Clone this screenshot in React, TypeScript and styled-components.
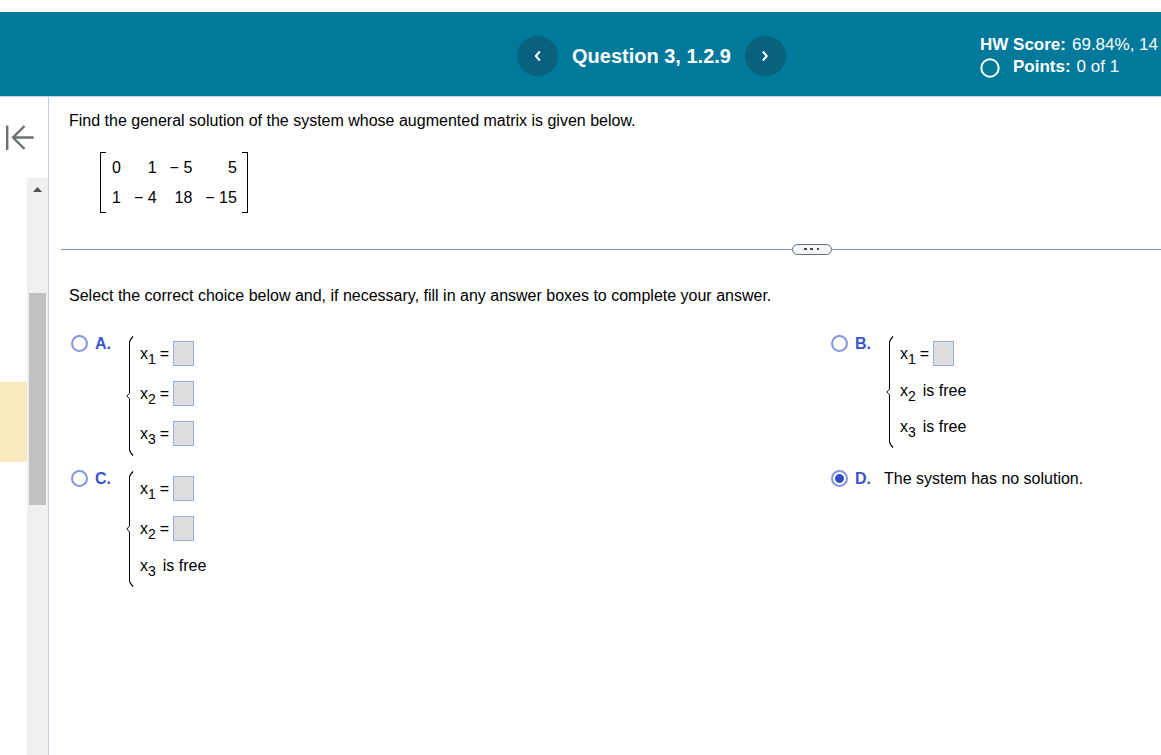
import React, { useState } from "react";
import styled, { createGlobalStyle } from "styled-components";

const GlobalStyle = createGlobalStyle`
  *, *::before, *::after { box-sizing: border-box; }
  body {
    margin: 0;
    background: #fff;
    color: #000;
    font-family: "Liberation Sans", Arial, sans-serif;
    font-size: 16px;
    line-height: 20px;
  }
`;

const Page = styled.div`
  display: flex;
  flex-direction: column;
  min-height: 100vh;
  padding-top: 12px;
  overflow: hidden;
`;

const Header = styled.header`
  display: grid;
  grid-template-columns: minmax(0, 1fr) 463px 181px;
  align-items: center;
  min-height: 85px;
  padding-top: 4px;
  background: #00799b;
  border-bottom: 1px solid #c9d0e0;
  color: #fff;
`;

const QuestionNav = styled.nav`
  grid-column: 2;
  display: flex;
  align-items: center;
  gap: 14px;
`;

const Title = styled.h1`
  margin: 0;
  font-size: 20px;
  line-height: 24px;
  white-space: nowrap;
`;

const RoundButton = styled.button`
  display: flex;
  align-items: center;
  justify-content: center;
  width: 41px;
  height: 40px;
  padding: 0;
  border: 0;
  border-radius: 50%;
  background: #08627f;
  color: #fff;
`;

const Score = styled.div`
  font-size: 17px;
  line-height: 22px;
  white-space: nowrap;
`;

const ScoreLine = styled.div`
  display: flex;
  align-items: center;
  gap: 6px;
`;

const StatusRing = styled.svg`
  margin: 2px 7px 0 0;
`;

const Body = styled.div`
  flex: 1;
  display: flex;
`;

const Sidebar = styled.aside`
  display: flex;
  flex-direction: column;
  width: 49px;
  border-right: 1px solid #c5cee0;
`;

const CollapseButton = styled.button`
  height: 81px;
  padding: 0 0 0 5px;
  border: 0;
  background: none;
  text-align: left;
  line-height: 0;
`;

const SidebarPane = styled.div`
  flex: 1;
  display: flex;
`;

const QuestionStrip = styled.div`
  flex: 1;
  padding-top: 204px;
`;

const CurrentMark = styled.div`
  height: 80px;
  background: #f9ebbd;
`;

const ScrollTrack = styled.div`
  display: flex;
  flex-direction: column;
  align-items: center;
  gap: 101px;
  width: 21px;
  padding-top: 9px;
  background: #f0f0f0;
`;

const ScrollThumb = styled.div`
  width: 17px;
  height: 212px;
  background: #c1c1c1;
`;

const Main = styled.main`
  flex: 1;
  min-width: 0;
  padding: 14px 0 0 12px;
`;

const Prompt = styled.p`
  margin: 0;
  padding-left: 8px;
`;

const MatrixFrame = styled.div`
  display: flex;
  width: max-content;
  margin: 21px 0 31px 39px;
`;

const Bracket = styled.span<{ $side: "left" | "right" }>`
  width: 6px;
  border: 1px solid #000;
  border-${(p) => (p.$side === "left" ? "right" : "left")}: 0;
`;

const Matrix = styled.table`
  border-collapse: collapse;
  margin: 1px 5px 0 6px;

  td {
    height: 30px;
    padding: 0 0 0 13px;
    text-align: right;
    white-space: nowrap;
  }
  td:first-child { padding-left: 0; }
`;

const Divider = styled.div`
  display: flex;
  align-items: center;
  margin-bottom: 31px;
`;

const Rule = styled.span<{ $grow: number }>`
  flex: ${(p) => p.$grow} 1 0;
  height: 1px;
  background: #8391a5;
`;

const ExpandButton = styled.button`
  display: flex;
  align-items: center;
  justify-content: center;
  width: 40px;
  height: 11px;
  padding: 0;
  border: 1px solid #5f6f80;
  border-radius: 6px;
  background: #f4f6f8;
`;

const Choices = styled.fieldset`
  display: grid;
  grid-template-columns: 760fr 332fr;
  row-gap: 14px;
  margin: 0;
  padding: 29px 0 0 8px;
  border: 0;
`;

const Choice = styled.div`
  display: flex;
  align-items: flex-start;
`;

const ChoiceLabel = styled.label`
  display: flex;
  align-items: center;
  gap: 7px;
  width: 55px;
  padding-left: 2px;
  line-height: 16px;
  font-weight: bold;
  color: #3a55cc;
`;

const Radio = styled.input`
  appearance: none;
  width: 17px;
  height: 17px;
  margin: 0;
  border: 2px solid #8395dd;
  border-radius: 50%;
  background: #fff;

  &:checked {
    background: radial-gradient(circle, #3150c8 0 4px, #fff 5px);
  }
`;

const System = styled.div`
  display: flex;
  gap: 6px;
  margin-left: 2px;
  padding-top: 1px;
`;

const BraceColumn = styled.span`
  display: flex;
  flex-direction: column;
  width: 8px;
`;

const BraceStem = styled.span`
  flex: 1;
  margin-left: 3px;
  border-left: 1px solid #000;
`;

const Equation = styled.div<{ $boxed: boolean }>`
  display: flex;
  height: ${(p) => (p.$boxed ? 40 : 36)}px;
  padding-top: 5px;
  line-height: ${(p) => (p.$boxed ? 25 : 20)}px;
  gap: 7px;
`;

const Sub = styled.sub`
  font-size: 14px;
  line-height: 0;
  vertical-align: -5px;
`;

const AnswerBox = styled.input`
  width: 21px;
  height: 25px;
  padding: 0;
  border: 1px solid #96aee4;
  border-radius: 0;
  background: #dedede;
`;

const BoxedLabel = styled.label`
  display: flex;
  gap: 4px;
`;

const Statement = styled.span`
  line-height: 18px;
`;

const matrixRows = [
  ["0", "1", "− 5", "5"],
  ["1", "− 4", "18", "− 15"],
];

const choices: { id: string; boxed?: boolean[]; text?: string }[] = [
  { id: "A", boxed: [true, true, true] },
  { id: "B", boxed: [true, false, false] },
  { id: "C", boxed: [true, true, false] },
  { id: "D", text: "The system has no solution." },
];

function Chevron({ direction }: { direction: "left" | "right" }) {
  return (
    <svg width="8" height="12" viewBox="0 0 8 12" fill="none" stroke="currentColor" strokeWidth="2" aria-hidden="true">
      <path d={direction === "left" ? "M5.8 1.5 1.8 6 5.8 10.5" : "M1.8 1.5 5.8 6 1.8 10.5"} />
    </svg>
  );
}

function Brace() {
  return (
    <BraceColumn aria-hidden="true">
      <svg width="8" height="6" viewBox="0 0 8 6" fill="none" stroke="#000" strokeWidth="1.2">
        <path d="M7 .5 4.5 3.5 3.5 6" />
      </svg>
      <BraceStem />
      <svg width="8" height="8" viewBox="0 0 8 8" fill="none" stroke="#000">
        <path d="M3.5 0V1.2L.8 4 3.5 6.8V8" />
      </svg>
      <BraceStem />
      <svg width="8" height="6" viewBox="0 0 8 6" fill="none" stroke="#000" strokeWidth="1.2">
        <path d="M3.5 0 4.5 2.5 7 5.5" />
      </svg>
    </BraceColumn>
  );
}

function EquationRow({ index, boxed }: { index: number; boxed: boolean }) {
  const variable = (
    <span>
      x<Sub>{index}</Sub>
    </span>
  );
  return (
    <Equation $boxed={boxed}>
      {boxed ? (
        <BoxedLabel>
          {variable}
          <span>=</span>
          <AnswerBox type="text" disabled />
        </BoxedLabel>
      ) : (
        <>
          {variable}
          <span>is free</span>
        </>
      )}
    </Equation>
  );
}

export default function App() {
  const [selected, setSelected] = useState("D");

  return (
    <>
      <GlobalStyle />
      <Page>
        <Header>
          <QuestionNav aria-label="Questions">
            <RoundButton type="button" aria-label="Previous question">
              <Chevron direction="left" />
            </RoundButton>
            <Title>Question 3, 1.2.9</Title>
            <RoundButton type="button" aria-label="Next question">
              <Chevron direction="right" />
            </RoundButton>
          </QuestionNav>
          <Score>
            <ScoreLine>
              <strong>HW Score:</strong>
              <span>69.84%, 14</span>
            </ScoreLine>
            <ScoreLine>
              <StatusRing width="20" height="20" viewBox="0 0 20 20" fill="none" stroke="#fff" strokeWidth="2" aria-hidden="true">
                <circle cx="10" cy="10" r="8.7" />
              </StatusRing>
              <strong>Points:</strong>
              <span>0 of 1</span>
            </ScoreLine>
          </Score>
        </Header>
        <Body>
          <Sidebar>
            <CollapseButton type="button" aria-label="Collapse question list">
              <svg width="30" height="26" viewBox="0 0 30 26" fill="none" stroke="#6c7272" strokeWidth="2.4" aria-hidden="true">
                <path d="M2.2 .5V25M28.7 12.5H8M19.5 1 8 12.5 19.5 24" />
              </svg>
            </CollapseButton>
            <SidebarPane>
              <QuestionStrip>
                <CurrentMark />
              </QuestionStrip>
              <ScrollTrack>
                <svg width="9" height="5" viewBox="0 0 9 5" fill="#505050" aria-hidden="true">
                  <path d="M0 5 4.5 0 9 5Z" />
                </svg>
                <ScrollThumb />
              </ScrollTrack>
            </SidebarPane>
          </Sidebar>
          <Main>
            <Prompt>Find the general solution of the system whose augmented matrix is given below.</Prompt>
            <MatrixFrame>
              <Bracket $side="left" />
              <Matrix>
                <tbody>
                  {matrixRows.map((row, r) => (
                    <tr key={r}>
                      {row.map((cell, c) => (
                        <td key={c}>{cell}</td>
                      ))}
                    </tr>
                  ))}
                </tbody>
              </Matrix>
              <Bracket $side="right" />
            </MatrixFrame>
            <Divider>
              <Rule $grow={731} />
              <ExpandButton type="button" aria-label="Resize panels">
                <svg width="16" height="3" viewBox="0 0 16 3" fill="#444b54" aria-hidden="true">
                  <path d="M0 0h3v2H0zM6 0h3v2H6zM13 0h2v2h-2z" />
                </svg>
              </ExpandButton>
              <Rule $grow={329} />
            </Divider>
            <Prompt id="instructions">
              Select the correct choice below and, if necessary, fill in any answer boxes to complete your answer.
            </Prompt>
            <Choices aria-labelledby="instructions">
              {choices.map(({ id, boxed, text }) => (
                <Choice key={id}>
                  <ChoiceLabel>
                    <Radio
                      type="radio"
                      name="choice"
                      checked={selected === id}
                      onChange={() => setSelected(id)}
                    />
                    {id}.
                  </ChoiceLabel>
                  {boxed ? (
                    <System>
                      <Brace />
                      <div>
                        {boxed.map((isBoxed, i) => (
                          <EquationRow key={i} index={i + 1} boxed={isBoxed} />
                        ))}
                      </div>
                    </System>
                  ) : (
                    <Statement>{text}</Statement>
                  )}
                </Choice>
              ))}
            </Choices>
          </Main>
        </Body>
      </Page>
    </>
  );
}
